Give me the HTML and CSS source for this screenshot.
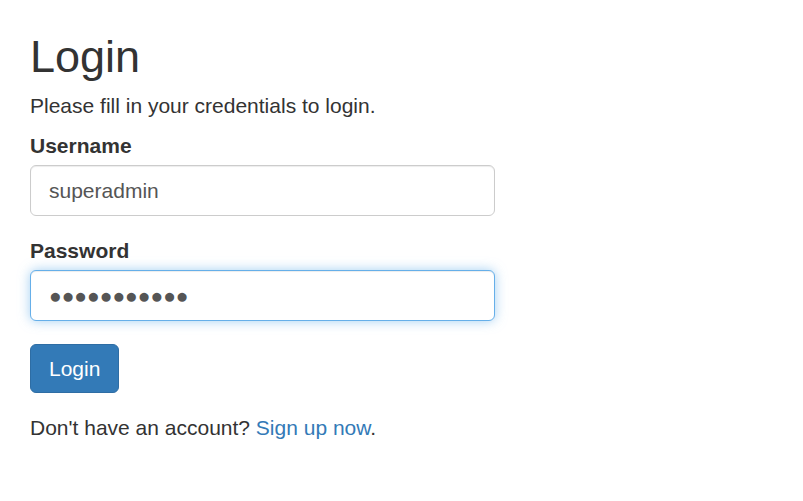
FILE: index.html
```html
<!DOCTYPE html>
<html lang="en">
<head>
<meta charset="utf-8">
<title>Login</title>
<link rel="stylesheet" href="styles.css">
</head>
<body>
<div class="wrapper">
  <h2 class="title">Login</h2>
  <p class="intro">Please fill in your credentials to login.</p>
  <form class="login-form">
    <div class="form-group">
      <label class="field-label">Username</label>
      <input class="form-control" type="text" value="superadmin" readonly>
    </div>
    <div class="form-group">
      <label class="field-label">Password</label>
      <input class="form-control is-focused masked" type="text" value="●●●●●●●●●●●" readonly>
    </div>
    <div class="actions">
      <button class="btn-primary" type="button">Login</button>
    </div>
    <p class="signup">Don't have an account? <a class="link" href="#">Sign up now</a>.</p>
  </form>
</div>
</body>
</html>
```
FILE: styles.css
```css
html, body {
  margin: 0;
  background: #fff;
}
body {
  font-family: "Liberation Sans", Arial, Helvetica, sans-serif;
  font-size: 21px;
  line-height: 30px;
  color: #333;
}
.wrapper {
  width: 465px;
  padding: 32px 30px;
}
.title {
  font-size: 45px;
  font-weight: 500;
  line-height: 49.5px;
  margin: 0 0 9px;
}
.intro {
  margin: 0 0 10px;
}
.login-form {
  margin: 0;
}
.form-group {
  margin-bottom: 19.5px;
}
.field-label {
  display: block;
  font-weight: bold;
  margin-bottom: 4.5px;
}
.form-control {
  display: block;
  box-sizing: border-box;
  width: 100%;
  height: 51px;
  margin: 0;
  padding: 9px 18px;
  font-family: inherit;
  font-size: 21px;
  line-height: 30px;
  color: #555;
  background: #fff;
  border: 1px solid #ccc;
  border-radius: 6px;
  box-shadow: inset 0 1px 1px rgba(0, 0, 0, .075);
  outline: 0;
}
.form-control.is-focused {
  border-color: #66afe9;
  box-shadow: inset 0 1px 1px rgba(0, 0, 0, .075), 0 0 12px rgba(102, 175, 233, .6);
}
.masked {
  font-family: "Liberation Sans", Arial, sans-serif;
}
.actions {
  padding-top: 3.3px;
  margin-bottom: 20px;
}
.btn-primary {
  display: inline-block;
  box-sizing: border-box;
  height: 49px;
  margin: 0;
  padding: 0 18px;
  font-family: inherit;
  font-size: 21px;
  line-height: 47px;
  color: #fff;
  background: #337ab7;
  border: 1px solid #2e6da4;
  border-radius: 6px;
  cursor: pointer;
}
.signup {
  margin: 0;
}
.link {
  color: #337ab7;
  text-decoration: none;
}
```
